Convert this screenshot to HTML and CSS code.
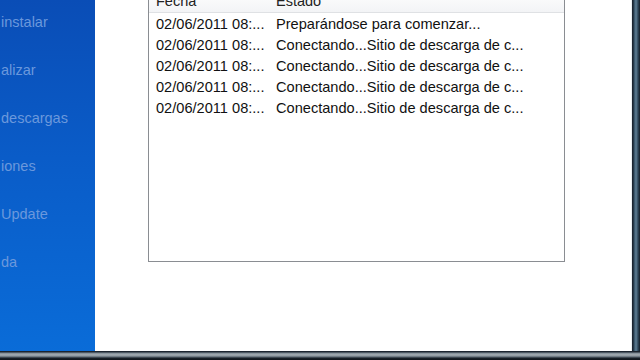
FILE: index.html
```html
<!DOCTYPE html>
<html lang="es">
<head>
  <meta charset="UTF-8" />
  <title>Historial</title>
  <link rel="stylesheet" href="styles.css">
</head>
<body>
  <div class="window">
    <div class="client">
      <div class="sidebar">
        <div class="side-link">instalar</div>
        <div class="side-link">alizar</div>
        <div class="side-link">descargas</div>
        <div class="side-link">iones</div>
        <div class="side-link">Update</div>
        <div class="side-link">da</div>
      </div>

      <div class="content">
        <div class="listview">
          <div class="list-header">
            <div class="col col-date">Fecha</div>
            <div class="col col-state">Estado</div>
          </div>
          <div class="rows">
            <div class="row">
              <div class="col col-date">02/06/2011 08:...</div>
              <div class="col col-state">Preparándose para comenzar...</div>
            </div>
            <div class="row">
              <div class="col col-date">02/06/2011 08:...</div>
              <div class="col col-state">Conectando...Sitio de descarga de c...</div>
            </div>
            <div class="row">
              <div class="col col-date">02/06/2011 08:...</div>
              <div class="col col-state">Conectando...Sitio de descarga de c...</div>
            </div>
            <div class="row">
              <div class="col col-date">02/06/2011 08:...</div>
              <div class="col col-state">Conectando...Sitio de descarga de c...</div>
            </div>
            <div class="row">
              <div class="col col-date">02/06/2011 08:...</div>
              <div class="col col-state">Conectando...Sitio de descarga de c...</div>
            </div>
          </div>
        </div>
      </div>

      <div class="frame-right"></div>
    </div>
    <div class="frame-bottom"></div>
  </div>
</body>
</html>
```

FILE: styles.css
```css
body {
  margin: 0;
  background-color: #fff;
  font-family: 'Liberation Sans', Arial, sans-serif;
  overflow: hidden;
}

.window {
  width: 640px;
  height: 360px;
  display: flex;
  flex-direction: column;
}

.client {
  display: flex;
  height: 351px;
}

.sidebar {
  width: 95px;
  flex-shrink: 0;
  background: linear-gradient(to bottom, #0a4db6 0%, #0a5cc8 45%, #0a6cd8 100%);
  padding-top: 12px;
  display: flex;
  flex-direction: column;
  gap: 28px;
  overflow: hidden;
}

.side-link {
  height: 20px;
  line-height: 20px;
  font-size: 14.5px;
  color: #6b98dc;
  padding-left: 1px;
  white-space: nowrap;
}

.content {
  flex: 1;
  background-color: #fff;
  padding-left: 53px;
}

.listview {
  width: 415px;
  height: 272px;
  margin-top: -12px;
  border: 1px solid #8a8d92;
  background-color: #fff;
}

.list-header {
  display: flex;
  height: 23px;
  line-height: 25px;
  background: linear-gradient(to bottom, #ffffff, #f3f4f6);
  border-bottom: 1px solid #dfe1e4;
  color: #222;
  font-size: 14.5px;
  overflow: hidden;
}

.rows {
  padding-top: 1px;
}

.row {
  display: flex;
  height: 21px;
  line-height: 21px;
  font-size: 14.6px;
  color: #111;
}

.col {
  white-space: nowrap;
  overflow: hidden;
}

.col-date {
  width: 120px;
  padding-left: 7px;
}

.col-state {
  flex: 1;
}

.frame-right {
  width: 9px;
  flex-shrink: 0;
  background: linear-gradient(to right, #e9eef2 0px, #e9eef2 1px, #1b2631 1px, #1b2631 2px, #2f4b60 3px, #5f7f95 5px, #2c475b 7px, #141c24 9px);
}

.frame-bottom {
  height: 9px;
  background: linear-gradient(to bottom, #1c2530 0px, #1c2530 1px, #7d8a94 2px, #a8b0b6 4px, #5e6a74 6px, #1a222b 7px, #0e141a 9px);
}
```
